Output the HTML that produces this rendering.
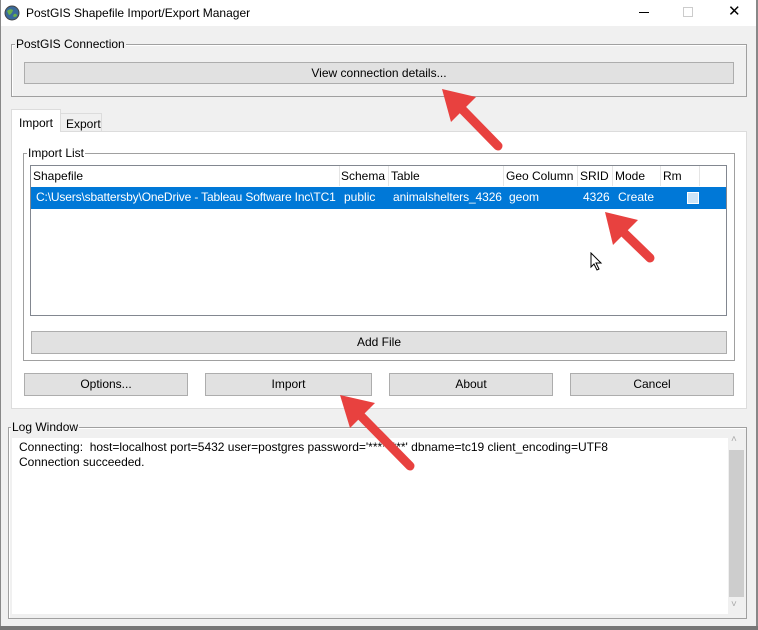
<!DOCTYPE html>
<html><head><meta charset="utf-8"><style>
*{box-sizing:border-box;margin:0;padding:0}
body{width:758px;height:630px;overflow:hidden;background:#f0f0f0;font-family:"Liberation Sans",sans-serif;font-size:12px;color:#000;position:relative}
.a{position:absolute}
.btn{position:absolute;background:#e1e1e1;border:1px solid #adadad;text-align:center;line-height:21px}
.grp{position:absolute;border:1px solid #dcdcdc;box-shadow:inset 1px 1px 0 #fff}
.lbl{position:absolute;background:#f0f0f0;padding:0 1px;line-height:14px}
.hd{position:absolute;top:0;line-height:20px}
.rw{position:absolute;top:0;line-height:21px;color:#fff;white-space:nowrap;overflow:hidden}
</style></head><body>
<div class="a" style="left:0;top:0;width:758px;height:26px;background:#fff"></div>
<div class="a" style="left:0;top:0;width:1px;height:630px;background:#888"></div>
<div class="a" style="left:756px;top:0;width:2px;height:630px;background:#888"></div>
<svg class="a" style="left:4px;top:5px" width="16" height="16"><circle cx="8" cy="8" r="7" fill="#3a6a9a"/><path d="M3 6 Q6 3 9 5 Q8 9 5 10Z M10 9 Q13 8 13 11 Q10 13 9 11Z" fill="#6bb04a"/><circle cx="8" cy="8" r="7" fill="none" stroke="#444"/></svg>
<div class="a" style="left:26px;top:6px;font-size:12px">PostGIS Shapefile Import/Export Manager</div>
<div class="a" style="left:639px;top:12px;width:10px;height:1px;background:#000"></div>
<div class="a" style="left:683px;top:7px;width:10px;height:10px;border:1px solid #ccc"></div>
<div class="a" style="left:728px;top:6px;font-size:15px;line-height:12px">✕</div>

<div class="grp" style="left:11px;top:44px;width:736px;height:53px;border-color:#a0a0a0"></div>
<div class="lbl" style="left:15px;top:37px">PostGIS Connection</div>
<div class="btn" style="left:24px;top:62px;width:710px;height:22px">View connection details...</div>

<div class="a" style="left:11px;top:109px;width:50px;height:23px;background:#fff;border:1px solid #dcdcdc;border-bottom:none;padding:6px 0 0 7px">Import</div>
<div class="a" style="left:60px;top:113px;width:42px;height:18px;background:#f0f0f0;border:1px solid #dcdcdc;border-bottom:none;padding:3px 0 0 5px">Export</div>
<div class="a" style="left:11px;top:131px;width:736px;height:278px;background:#fff;border:1px solid #dcdcdc;border-top:none"></div>
<div class="a" style="left:11px;top:131px;width:736px;height:1px;background:#dcdcdc"></div>
<div class="a" style="left:12px;top:131px;width:48px;height:1px;background:#fff"></div>

<div class="grp" style="left:23px;top:153px;width:712px;height:208px;border-color:#a0a0a0;box-shadow:none"></div>
<div class="lbl" style="left:27px;top:146px;background:#fff">Import List</div>
<div class="a" style="left:30px;top:165px;width:697px;height:151px;border:1px solid #828790;background:#fff"></div>
<div class="a" style="left:31px;top:166px;width:669px;height:20px;background:#fff">
<div class="hd" style="left:2px">Shapefile</div>
<div class="hd" style="left:310px">Schema</div>
<div class="hd" style="left:360px">Table</div>
<div class="hd" style="left:475px">Geo Column</div>
<div class="hd" style="left:549px">SRID</div>
<div class="hd" style="left:584px">Mode</div>
<div class="hd" style="left:632px">Rm</div>
<div class="a" style="left:308px;top:0;width:1px;height:20px;background:#e5e5e5"></div>
<div class="a" style="left:357px;top:0;width:1px;height:20px;background:#e5e5e5"></div>
<div class="a" style="left:472px;top:0;width:1px;height:20px;background:#e5e5e5"></div>
<div class="a" style="left:546px;top:0;width:1px;height:20px;background:#e5e5e5"></div>
<div class="a" style="left:581px;top:0;width:1px;height:20px;background:#e5e5e5"></div>
<div class="a" style="left:629px;top:0;width:1px;height:20px;background:#e5e5e5"></div>
<div class="a" style="left:668px;top:0;width:1px;height:20px;background:#e5e5e5"></div>
</div>
<div class="a" style="left:31px;top:187px;width:695px;height:22px;background:#0078d7">
<div class="rw" style="left:5px;width:305px;letter-spacing:-0.15px">C:\Users\sbattersby\OneDrive - Tableau Software Inc\TC1</div>
<div class="rw" style="left:313px">public</div>
<div class="rw" style="left:362px;letter-spacing:-0.1px">animalshelters_4326</div>
<div class="rw" style="left:478px">geom</div>
<div class="rw" style="left:552px">4326</div>
<div class="rw" style="left:587px">Create</div>
<div class="a" style="left:656px;top:5px;width:12px;height:12px;background:#cce4f7;border:1px solid #fff"></div>
</div>
<svg class="a" style="left:590px;top:252px" width="14" height="20"><path d="M1 1 L1 15 L4 12 L7 18 L9 17 L6 11 L11 11 Z" fill="#fff" stroke="#000"/></svg>
<div class="btn" style="left:31px;top:331px;width:696px;height:23px">Add File</div>

<div class="btn" style="left:24px;top:373px;width:164px;height:23px">Options...</div>
<div class="btn" style="left:205px;top:373px;width:167px;height:23px">Import</div>
<div class="btn" style="left:389px;top:373px;width:164px;height:23px">About</div>
<div class="btn" style="left:570px;top:373px;width:164px;height:23px">Cancel</div>

<div class="grp" style="left:8px;top:427px;width:739px;height:192px;border-color:#a0a0a0"></div>
<div class="lbl" style="left:11px;top:420px">Log Window</div>
<div class="a" style="left:12px;top:438px;width:716px;height:176px;background:#fff;padding:2px 0 0 7px;line-height:15px">Connecting:&nbsp; host=localhost port=5432 user=postgres password='********' dbname=tc19 client_encoding=UTF8<br>Connection succeeded.</div>
<div class="a" style="left:728px;top:433px;width:17px;height:181px;background:#f0f0f0"></div>
<div class="a" style="left:729px;top:450px;width:15px;height:147px;background:#cdcdcd"></div>
<div class="a" style="left:731px;top:434px;color:#aaa;font-size:10px">˄</div>
<div class="a" style="left:731px;top:599px;color:#aaa;font-size:10px">˅</div>
<div class="a" style="left:0;top:626px;width:758px;height:4px;background:#777"></div>

<svg class="a" style="left:0;top:0" width="758" height="630">
<g stroke="#e8413f" stroke-width="9" stroke-linecap="round" fill="#e8413f">
<line x1="498" y1="146" x2="456" y2="103"/>
<line x1="650" y1="258" x2="617" y2="226"/>
<line x1="410" y1="466" x2="355" y2="410"/>
</g>
<g fill="#e8413f">
<polygon points="442,89 476,97 451,122"/>
<polygon points="605,212 638,220 613,245"/>
<polygon points="340,395 375,403 350,428"/>
</g>
</svg>
</body></html>
